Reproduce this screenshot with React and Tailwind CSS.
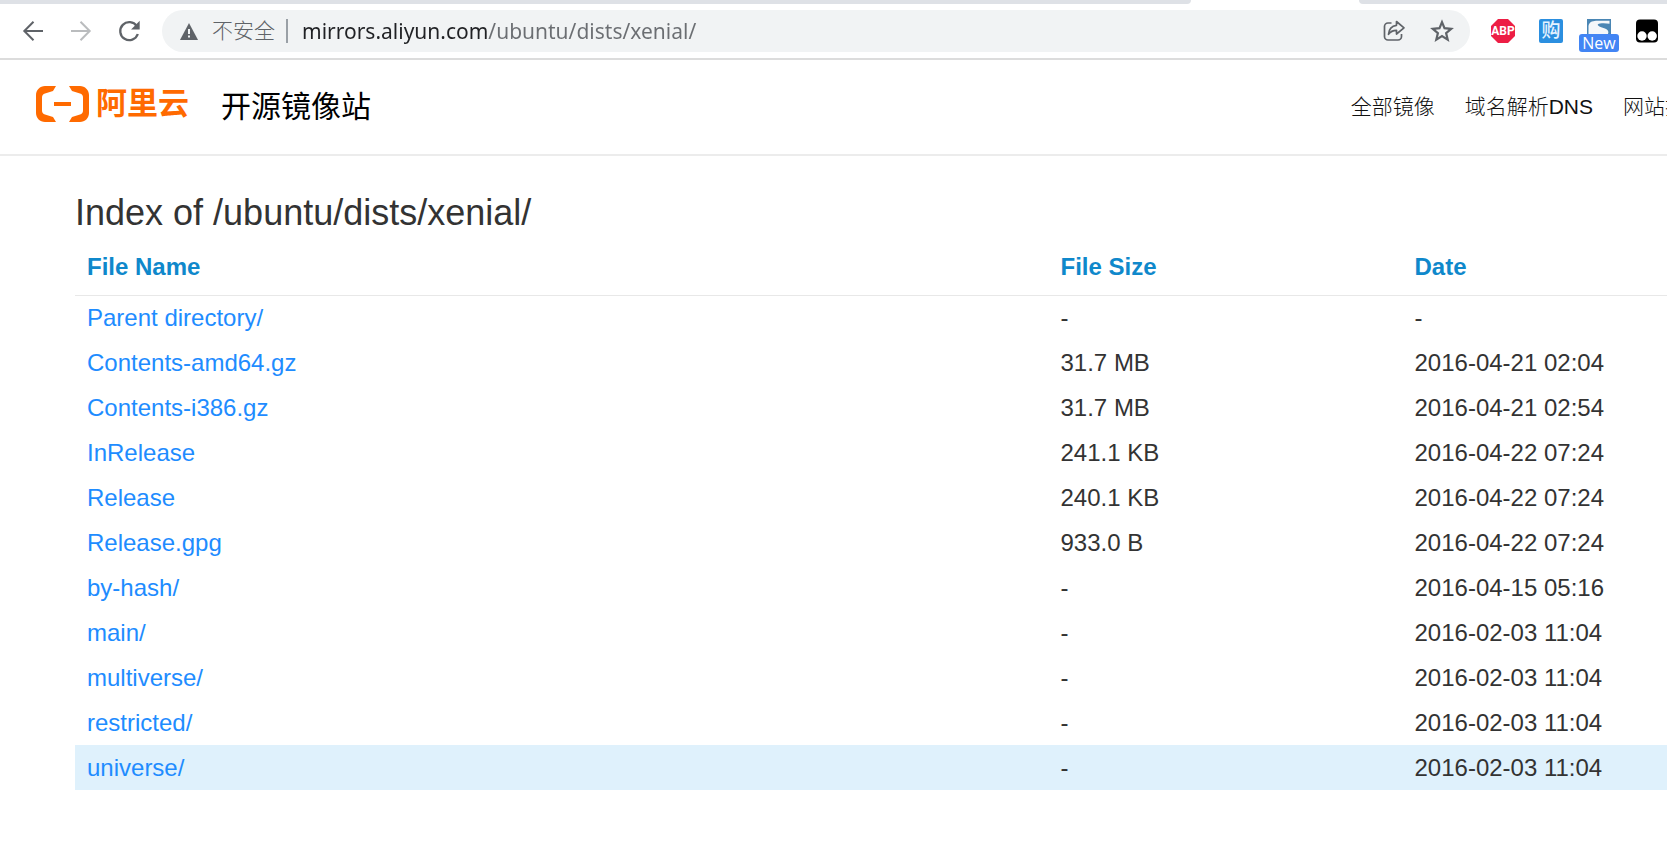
import React, { useState } from "react";

// Constants
const NAV_LINKS = ["全部镜像", "域名解析DNS", "网站托管"];

const FILES = [
  { name: "Parent directory/", size: "-", date: "-" },
  { name: "Contents-amd64.gz", size: "31.7 MB", date: "2016-04-21 02:04" },
  { name: "Contents-i386.gz", size: "31.7 MB", date: "2016-04-21 02:54" },
  { name: "InRelease", size: "241.1 KB", date: "2016-04-22 07:24" },
  { name: "Release", size: "240.1 KB", date: "2016-04-22 07:24" },
  { name: "Release.gpg", size: "933.0 B", date: "2016-04-22 07:24" },
  { name: "by-hash/", size: "-", date: "2016-04-15 05:16" },
  { name: "main/", size: "-", date: "2016-02-03 11:04" },
  { name: "multiverse/", size: "-", date: "2016-02-03 11:04" },
  { name: "restricted/", size: "-", date: "2016-02-03 11:04" },
  { name: "universe/", size: "-", date: "2016-02-03 11:04" },
];

function TabStrip() {
  return (
    <div className="flex h-1 bg-white">
      <div className="grow rounded-br-sm bg-[#dee1e6]"></div>
      <div className="w-[168px]"></div>
      <div className="w-[308px] rounded-bl-sm bg-[#dee1e6]"></div>
    </div>
  );
}

function Toolbar() {
  const [url, setUrl] = useState("mirrors.aliyun.com/ubuntu/dists/xenial/");

  return (
    <div className="flex items-center h-14 pl-[21px] pr-2 border-b-2 border-[#dcdcdc] bg-white">
      <div className="flex gap-6">
        <button aria-label="Back" className="w-6 h-6">
          <svg viewBox="0 0 24 24" className="w-6 h-6" fill="none" stroke="#5f6368" strokeWidth="2">
            <path d="M22 12H3.5M12.5 2.8L3.3 12l9.2 9.2" />
          </svg>
        </button>
        <button aria-label="Forward" className="w-6 h-6">
          <svg viewBox="0 0 24 24" className="w-6 h-6" fill="none" stroke="#babcbe" strokeWidth="2">
            <path d="M2 12h18.5M11.5 2.8l9.2 9.2-9.2 9.2" />
          </svg>
        </button>
        <button aria-label="Reload" className="w-6 h-6">
          <svg viewBox="0 0 24 24" className="w-6 h-6" fill="none" stroke="#5f6368" strokeWidth="2.3">
            <path d="M19.8 7.2A9 9 0 1 0 20.8 15" />
            <path d="M22.7 1.8v8.6h-8.6z" fill="#5f6368" stroke="none" />
          </svg>
        </button>
      </div>

      <div className="flex grow items-center h-[42px] ml-[21px] pl-[18px] pr-4 rounded-full bg-[#f1f3f4]">
        <svg viewBox="0 0 18 17" className="w-[18px] h-[17px]">
          <path d="M9 0l9 17H0z" fill="#5f6368" />
          <path d="M8 6h2v5H8zM8 12.5h2v2H8z" fill="#f1f3f4" />
        </svg>
        <span className="ml-[14px] text-[21px] leading-6 font-light text-[#5f6368]">不安全</span>
        <span className="w-[2px] h-6 ml-[11px] bg-[#9aa0a6]"></span>
        <input
          type="text"
          aria-label="Address"
          value={url}
          onChange={(e) => setUrl(e.target.value)}
          className="grow min-w-0 ml-[14px] h-8 font-['Noto_Sans'] text-[21px] text-transparent caret-black bg-clip-text bg-[linear-gradient(90deg,#202124_185px,#6b6e72_185px)] outline-none"
        />
        <button aria-label="Share" className="w-6 h-6">
          <svg viewBox="0 0 24 24" className="w-6 h-6" fill="none" stroke="#5f6368" strokeWidth="1.7" strokeLinejoin="round">
            <path d="M9.500 4H6a3.500 3.500 0 0 0-3.500 3.500v10A3.500 3.500 0 0 0 6 21h10a3.500 3.500 0 0 0 3.500-3.500v-2.500" />
            <path d="M14.500 2.500l7.500 6.300-7.500 6.200v-3.700c-3.500 0-6 1-8 4 .4-5 3-8.400 8-9z" />
          </svg>
        </button>
        <button aria-label="Bookmark" className="w-6 h-6 ml-6">
          <svg viewBox="0 0 24 24" className="w-6 h-6" fill="none" stroke="#5f6368" strokeWidth="2.200">
            <path d="M12 3.200l2.500 6 6.700.6-5.100 4.300 1.600 6.500-5.700-3.500-5.700 3.500 1.600-6.500-5.100-4.300 6.700-.6z" />
          </svg>
        </button>
      </div>

      <div className="flex items-center gap-6 ml-[21px]">
        <button aria-label="ABP" className="w-6 h-6">
          <svg viewBox="0 0 24 24" className="w-6 h-6">
            <path d="M7 0h10l7 7v10l-7 7H7l-7-7V7z" fill="#ed1e45" />
            <text x="12" y="16" textAnchor="middle" fill="#fff" className="font-[Roboto] text-[12px] font-bold">ABP</text>
          </svg>
        </button>
        <button aria-label="购" className="w-6 h-6 rounded-[2px] bg-[#2b8fe0] text-[#e6f3ff] text-[19px] leading-6 font-medium">
          购
        </button>
        <button aria-label="New" className="relative w-6 h-6">
          <svg viewBox="0 0 24 24" className="w-6 h-6">
            <path d="M0 0h24v15H0z" fill="#4a86b4" />
            <path d="M1.500 13V7C2 3.500 5 2 9 1.800h13.500v3c-4-1-10-.9-11.500.4-1.500 1.500 3 2.800 7 4.300 3 1.200 4 3 3 5.500H1.500z" fill="#f4f7fa" />
          </svg>
          <span className="absolute left-[-8px] top-[15px] w-10 h-[18px] rounded-[3px] bg-[#4285f4] text-white text-[16px] leading-[18px] font-['Open_Sans'] font-medium">
            New
          </span>
        </button>
        <button aria-label="Extension" className="w-6 h-6">
          <svg viewBox="0 0 24 24" className="w-6 h-6">
            <rect x="1" y="0.500" width="22" height="23" rx="4" />
            <circle cx="7" cy="17" r="4.700" fill="#fff" />
            <circle cx="17.200" cy="17" r="4.700" fill="#fff" />
          </svg>
        </button>
      </div>
    </div>
  );
}

function Header() {
  return (
    <header className="flex items-center h-24 pl-9 border-b-2 border-[#ececec] whitespace-nowrap">
      <a href="#" className="flex items-center gap-[7px] pb-[6px] text-[#ff6a00]">
        <svg viewBox="0 0 53 36" className="w-[53px] h-9" fill="currentColor">
          <path d="M20 0H9C4 0 0 4 0 9v18c0 5 4 9 9 9h11l-3-5-8-2.500c-2-.6-3-2-3-4V11.500c0-2 1-3.400 3-4L17 5z" />
          <path d="M33 0h11c5 0 9 4 9 9v18c0 5-4 9-9 9H33l3-5 8-2.500c2-.6 3-2 3-4V11.500c0-2-1-3.400-3-4L36 5z" />
          <path d="M18 16h17v4H18z" />
        </svg>
        <span className="text-[31px] leading-9 font-bold">阿里云</span>
      </a>
      <span className="ml-8 text-[30px] leading-9 text-black">开源镜像站</span>
      <nav className="flex gap-[30px] ml-auto -mr-10">
        {NAV_LINKS.map((link) => (
          <a key={link} href="#" className="text-[21px] leading-8 font-light text-[#111]">{link}</a>
        ))}
      </nav>
    </header>
  );
}

function App() {
  return (
    <div className="min-h-screen overflow-hidden bg-white text-[#333] font-['Liberation_Sans','Noto_Sans_CJK_SC',sans-serif]">
      <TabStrip />
      <Toolbar />
      <Header />

      {/* The listing runs past the right edge of the window */}
      <main className="ml-[75px] -mr-[178px] pt-[30px]">
        <h1 className="text-[36px] leading-[54px]">Index of /ubuntu/dists/xenial/</h1>
        <table className="w-full table-fixed text-left text-[24px] leading-9">
          <thead>
            <tr className="h-[55px] border-b border-[#e8e8e8] text-[#0f88cb]">
              <th className="w-[55%] px-3">File Name</th>
              <th className="w-[20%] px-3">File Size</th>
              <th className="w-[25%] px-3">Date</th>
            </tr>
          </thead>
          <tbody>
            {FILES.map((file) => (
              <tr key={file.name} className="h-[45px] last:bg-[#dff1fc] hover:bg-[#dff1fc]">
                <td className="px-3">
                  <a href="#" className="text-[#1e8cff]">{file.name}</a>
                </td>
                <td className="px-3">{file.size}</td>
                <td className="px-3">{file.date}</td>
              </tr>
            ))}
          </tbody>
        </table>
      </main>
    </div>
  );
}

export default App;
